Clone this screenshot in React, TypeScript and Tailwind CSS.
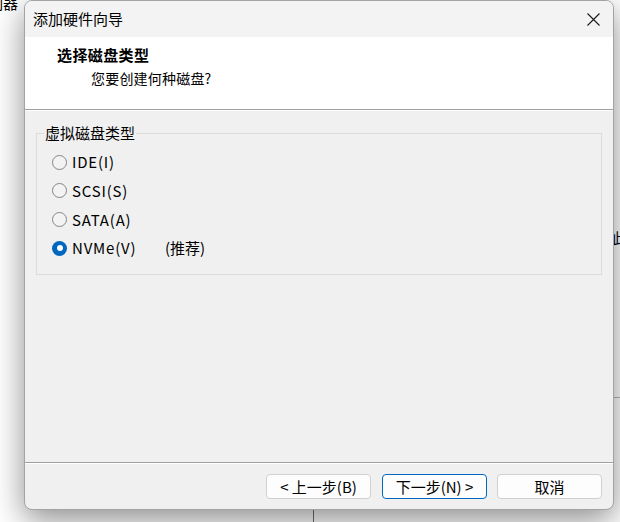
import React from "react";

function Radio({ checked }: { checked?: boolean }) {
  if (checked) {
    return (
      <span className="w-[15px] h-[15px] rounded-full bg-[#0067c0] flex items-center justify-center shrink-0">
        <span className="w-[6px] h-[6px] rounded-full bg-white" />
      </span>
    );
  }
  return <span className="w-[15px] h-[15px] rounded-full border border-[#858585] bg-[#f3f3f3] shrink-0" />;
}

function Option({ label, checked, extra }: { label: string; checked?: boolean; extra?: string }) {
  return (
    <div className="h-[28.67px] flex items-center pl-[15px]">
      <Radio checked={checked} />
      <span className="ml-[5px] text-[15px] leading-[20px] tracking-[0.8px] text-black inline-block w-[93px]">{label}</span>
      {extra && <span className="text-[15px] leading-[20px] text-black">{extra}</span>}
    </div>
  );
}

export default function App() {
  return (
    <div className="relative w-[620px] h-[522px] overflow-hidden bg-white font-['Noto_Sans_CJK_SC','Noto_Sans',sans-serif] text-black">
      {/* underlying window content */}
      <div className="absolute left-[-27px] top-[-5px] text-[15px] leading-[15px] whitespace-nowrap">控制器</div>
      <div className="absolute left-[612px] top-[230px] text-[15px] leading-[15px] whitespace-nowrap">此</div>
      <div className="absolute left-[614px] top-[397px] w-[6px] h-px bg-[#b8b8b8]" />
      <div className="absolute left-[313px] top-[300px] w-px h-[222px] bg-[#6e6e6e]" />

      {/* dialog window */}
      <div className="absolute left-[24px] top-0 w-[590px] h-[510px] rounded-[8px] border border-[#a3a3a3] bg-[#f0f0f0] shadow-[0_10px_32px_rgba(0,0,0,0.45)] overflow-hidden flex flex-col">
        {/* title bar */}
        <div className="h-[36px] shrink-0 bg-[#f3f3f3] flex items-center justify-between pl-[8px]">
          <span className="text-[15px] leading-[20px]">添加硬件向导</span>
          <div className="w-[40px] h-full flex items-center justify-center">
            <svg width="13" height="13" viewBox="0 0 13 13" fill="none">
              <path d="M0.5 0.5 L12.5 12.5 M12.5 0.5 L0.5 12.5" stroke="#1a1a1a" strokeWidth="1.1" />
            </svg>
          </div>
        </div>

        {/* header */}
        <div className="h-[72px] shrink-0 bg-white pt-[7.5px]">
          <div className="pl-[32px] text-[15px] leading-[20px] font-bold tracking-[0.4px]">选择磁盘类型</div>
          <div className="pl-[66px] mt-[4.5px] text-[14px] leading-[18px] tracking-[0.2px]">您要创建何种磁盘?</div>
        </div>
        <div className="h-px shrink-0 bg-[#a0a0a0]" />
        <div className="h-px shrink-0 bg-white" />

        {/* body */}
        <div className="flex-1 px-[11px] pt-[22px]">
          <div className="relative border border-[#dcdcdc] h-[142px] pt-[14px]">
            <span className="absolute left-[7px] top-[-11px] px-[1px] bg-[#f0f0f0] text-[15px] leading-[20px]">虚拟磁盘类型</span>
            <Option label="IDE(I)" />
            <Option label="SCSI(S)" />
            <Option label="SATA(A)" />
            <Option label="NVMe(V)" checked extra="(推荐)" />
          </div>
        </div>

        {/* footer */}
        <div className="h-px shrink-0 bg-[#a0a0a0]" />
        <div className="h-px shrink-0 bg-white" />
        <div className="h-[45px] shrink-0 flex items-start justify-end pt-[10px] pr-[11px]">
          <button className="w-[105px] h-[25px] rounded-[4px] border border-[#d0d0d0] bg-[#fdfdfd] text-[15px] leading-[20px] flex items-center justify-center">&lt; 上一步(B)</button>
          <button className="ml-[11px] w-[105px] h-[25px] rounded-[4px] border border-[#0067c0] bg-[#fdfdfd] text-[15px] leading-[20px] flex items-center justify-center">下一步(N) &gt;</button>
          <button className="ml-[10px] w-[105px] h-[25px] rounded-[4px] border border-[#d0d0d0] bg-[#fdfdfd] text-[15px] leading-[20px] flex items-center justify-center">取消</button>
        </div>
      </div>
    </div>
  );
}
